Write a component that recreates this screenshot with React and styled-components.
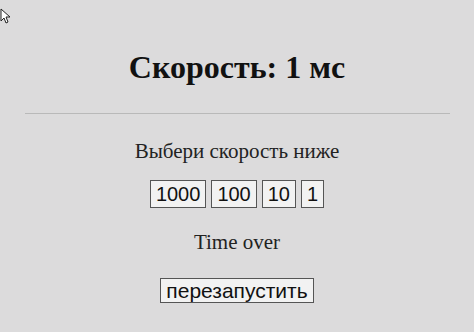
import React, {useState} from "react";
import styled, {createGlobalStyle} from "styled-components";

const GlobalStyle = createGlobalStyle`
  html, body {
    margin: 0;
    padding: 0;
    background: #dcdbdc;
  }
  body {
    font-family: "Liberation Serif", "Times New Roman", serif;
    color: #1a1a1a;
  }
`;

const speeds = [1000, 100, 10, 1];

const App = () => {
  const [speed, setSpeed] = useState(1);

  return (
    <Page>
      <GlobalStyle />
      <Cursor viewBox="0 0 10 16" aria-hidden="true">
        <path d="M1 1 L1 13 L4 10 L6 15 L8 14 L6 9 L10 9 Z" fill="#fff" stroke="#222" strokeWidth="1" />
      </Cursor>
      <Title>Скорость: {speed} мс</Title>
      <Divider />
      <Label $gap={25}>Выбери скорость ниже</Label>
      <Buttons>
        {speeds.map((s) => (
          <SpeedButton key={s} onClick={() => setSpeed(s)}>
            {s}
          </SpeedButton>
        ))}
      </Buttons>
      <Label $gap={22}>Time over</Label>
      <Restart onClick={() => setSpeed(1)}>перезапустить</Restart>
    </Page>
  );
};

const Page = styled.div`
  position: relative;
  width: 474px;
  height: 332px;
  box-sizing: border-box;
  padding-top: 49px;
  display: flex;
  flex-direction: column;
  align-items: center;
  overflow: hidden;
`;

const Cursor = styled.svg`
  position: absolute;
  left: 0;
  top: 8px;
  width: 10px;
  height: 16px;
`;

const Title = styled.h1`
  margin: 0;
  font-size: 32px;
  font-weight: bold;
  line-height: 37px;
  color: #111;
`;

const Divider = styled.hr`
  width: 425px;
  margin: 27px 0 0;
  border: 0;
  border-top: 1px solid #b9b9b9;
`;

const Label = styled.p`
  margin: ${(p) => p.$gap}px 0 0;
  font-size: 21px;
  line-height: 24px;
  color: #222;
`;

const Buttons = styled.div`
  display: flex;
  gap: 5px;
  margin-top: 17px;
`;

const SpeedButton = styled.button`
  font-family: "Liberation Sans", Arial, sans-serif;
  font-size: 20px;
  line-height: 22px;
  padding: 2px 5px;
  background: #f2f2f2;
  color: #111;
  border: 1px solid #555;
  border-radius: 0;
  cursor: pointer;
`;

const Restart = styled(SpeedButton)`
  margin-top: 24px;
  font-size: 21px;
  line-height: 23px;
  padding: 0 5px;
`;

export default App;
